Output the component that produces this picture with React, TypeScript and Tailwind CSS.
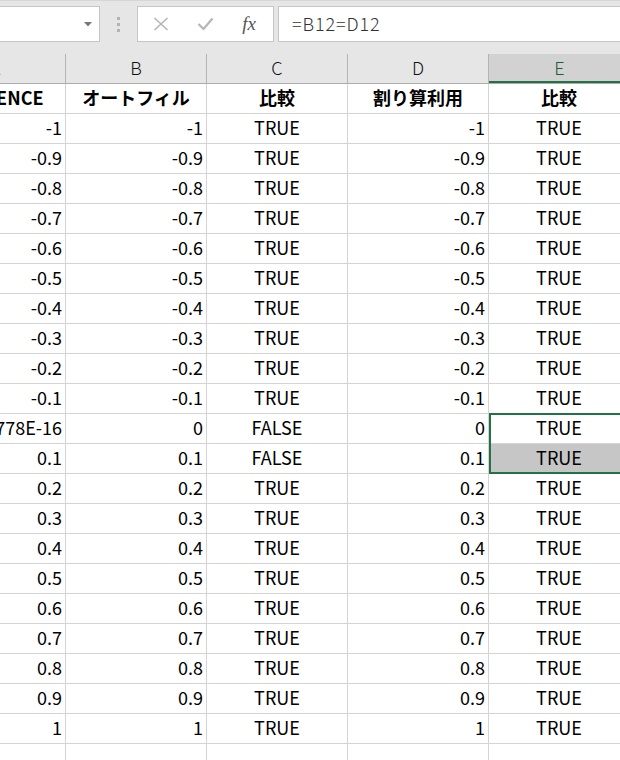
import React from 'react';

const values = ['-1', '-0.9', '-0.8', '-0.7', '-0.6', '-0.5', '-0.4', '-0.3', '-0.2', '-0.1', '0', '0.1', '0.2', '0.3', '0.4', '0.5', '0.6', '0.7', '0.8', '0.9', '1'];

const font = { fontFamily: '"Noto Sans CJK JP", "Noto Sans", sans-serif' };

function Cell({ children, align = 'right', bold = false, selected = false }: { children?: React.ReactNode; align?: 'right' | 'center'; bold?: boolean; selected?: boolean }) {
  return (
    <div
      className={`w-[141px] shrink-0 h-[30px] pb-[3px] border-r border-b border-[#d4d4d4] flex items-center whitespace-nowrap overflow-hidden text-[18px] leading-none text-black ${
        align === 'right' ? 'justify-end pr-[3px]' : 'justify-center'
      } ${bold ? 'font-bold' : 'font-normal'} ${selected ? 'bg-[#c6c6c6]' : ''}`}
    >
      {children}
    </div>
  );
}

export default function App() {
  return (
    <div className="w-[620px] h-[760px] overflow-hidden bg-white relative" style={font}>
      {/* Formula bar */}
      <div className="h-[54px] bg-[#e6e6e6] border-t border-[#d6d6d6] flex items-start pt-[5px]">
        <div className="w-[101px] h-[36px] -ml-px bg-white border border-[#c6c6c6] flex items-center justify-end pr-[7px]">
          <svg width="8" height="5" viewBox="0 0 8 5">
            <path d="M0 0 H8 L4 4.5 Z" fill="#777" />
          </svg>
        </div>
        <div className="w-[37px] h-[36px] flex flex-col items-center justify-center gap-[3px]">
          <div className="w-[3px] h-[3px] bg-[#b3b3b3]" />
          <div className="w-[3px] h-[3px] bg-[#b3b3b3]" />
          <div className="w-[3px] h-[3px] bg-[#b3b3b3]" />
        </div>
        <div className="w-[137px] h-[36px] bg-white border border-[#c6c6c6] flex items-center">
          <div className="w-[44px] flex justify-center ml-[1px]">
            <svg width="16" height="14" viewBox="0 0 16 14">
              <path d="M1.5 1 L14.5 13 M14.5 1 L1.5 13" stroke="#b5b5b5" strokeWidth="1.6" />
            </svg>
          </div>
          <div className="w-[44px] flex justify-center">
            <svg width="17" height="14" viewBox="0 0 17 14">
              <path d="M1.5 7 L6.5 12 L15.5 1.5" stroke="#b5b5b5" strokeWidth="2.2" fill="none" />
            </svg>
          </div>
          <div className="w-[44px] flex justify-center">
            <span className="text-[19px] italic text-[#555]" style={{ fontFamily: '"Liberation Serif", serif' }}>
              fx
            </span>
          </div>
        </div>
        <div className="flex-1 h-[36px] ml-[4px] -mr-px bg-white border border-[#c6c6c6] flex items-center pl-[13px] pb-[2px]">
          <span className="text-[18px] font-light text-[#333] tracking-[0.9px]">=B12=D12</span>
        </div>
      </div>

      {/* Column headers */}
      <div className="flex -ml-[75px] h-[30px] bg-[#e6e6e6] border-b border-[#ababab]">
        {['A', 'B', 'C', 'D'].map((c) => (
          <div key={c} className="w-[141px] shrink-0 h-full pb-[2px] border-r border-[#b4b4b4] flex items-center justify-center text-[18px] font-light text-[#111]">
            {c}
          </div>
        ))}
        <div className="w-[141px] shrink-0 h-full pb-[1px] bg-[#d2d2d2] border-b-2 border-[#217346] flex items-center justify-center text-[18px] font-light text-[#1e5c3a]">
          E
        </div>
      </div>

      {/* Grid */}
      <div className="-ml-[75px]">
        <div className="flex">
          <Cell align="center" bold>SEQUENCE</Cell>
          <Cell align="center" bold>オートフィル</Cell>
          <Cell align="center" bold>比較</Cell>
          <Cell align="center" bold>割り算利用</Cell>
          <Cell align="center" bold>比較</Cell>
        </div>
        {values.map((v, i) => (
          <div key={i} className="flex">
            <Cell>{v === '0' ? '1.38778E-16' : v}</Cell>
            <Cell>{v}</Cell>
            <Cell align="center">{v === '0' || v === '0.1' ? 'FALSE' : 'TRUE'}</Cell>
            <Cell>{v}</Cell>
            <Cell align="center" selected={v === '0.1'}>TRUE</Cell>
          </div>
        ))}
        <div className="flex">
          <Cell />
          <Cell />
          <Cell />
          <Cell />
          <Cell />
        </div>
      </div>

      {/* Selection outline */}
      <div className="absolute left-[489px] top-[413px] w-[150px] h-[61px] border-2 border-[#217346] pointer-events-none" />
    </div>
  );
}
